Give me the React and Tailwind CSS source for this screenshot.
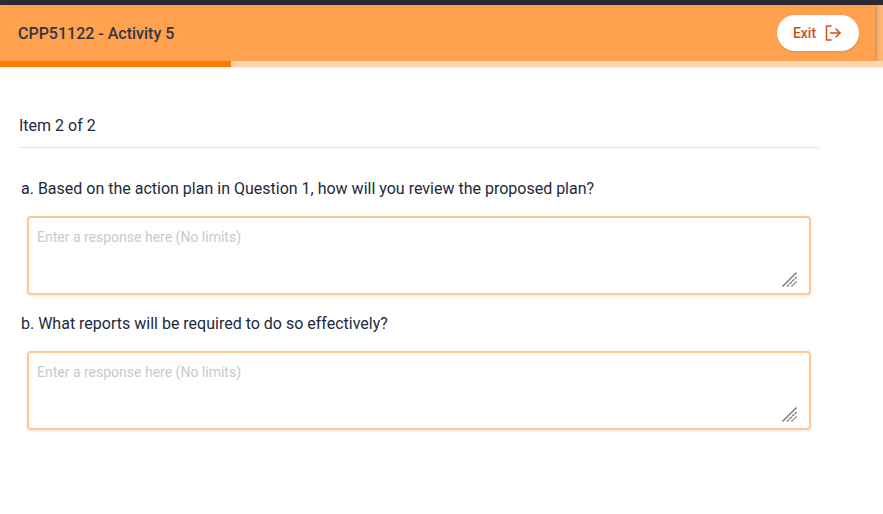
import React from "react";

function Question({ label }) {
	return (
		<div>
			<p className="ml-[2px] text-[16px] leading-[24px] text-[#1e293b]">{label}</p>
			<div className="relative ml-[8px] mt-[15px] w-[784px]">
				<textarea
					placeholder="Enter a response here (No limits)"
					className="block h-[79px] w-full resize-none rounded-[4px] border-2 border-[#ffc794] bg-white px-[8px] py-[9px] text-[14px] leading-[20px] text-[#1e293b] shadow-[0_1px_3px_rgba(0,0,0,0.1)] outline-none placeholder:text-[#c6cad0]"
				/>
				<svg className="absolute bottom-[8px] right-[14px]" width="15" height="15" viewBox="0 0 15 15" fill="none" stroke="#7a7a7a" strokeWidth="1.4">
					<path d="M0.5 14.5L14.5 0.5" />
					<path d="M5 14.5L14.5 5" strokeDasharray="3 0.7" />
					<path d="M9.5 14.5L14.5 9.5" strokeDasharray="2 0.7" />
				</svg>
			</div>
		</div>
	);
}

export default function App() {
	return (
		<div className="h-[514px] w-[883px] overflow-hidden bg-white font-['Roboto',sans-serif]">
			<div className="h-[5px] bg-[#2b2b36]" />
			<div className="flex h-[56px] bg-[#ffb672]">
				<div className="flex w-[875px] items-center justify-between bg-[#ffa14f] pl-[18px] pr-[16px] shadow-[2px_0_3px_rgba(0,0,0,0.2)]">
					<h1 className="mt-[1px] text-[16px] font-medium leading-[24px] text-[#33373f]">CPP51122 - Activity 5</h1>
					<button className="flex h-[36px] w-[82px] items-center justify-center gap-[9px] rounded-full bg-white pr-[2px] text-[14px] font-medium text-[#cf4f10] shadow-sm">
						Exit
						<svg width="16" height="18" viewBox="0 0 16 18" fill="none" stroke="currentColor" strokeWidth="1.5" strokeLinecap="round" strokeLinejoin="round">
							<path d="M6 2H1.5v14H6" />
							<path d="M5.5 9h9.5" />
							<path d="M11 5l4 4-4 4" />
						</svg>
					</button>
				</div>
			</div>
			<div className="relative h-[6px] bg-[#ffd5b0] shadow-[0_1px_3px_rgba(0,0,0,0.08)]">
				<div className="h-full w-[231px] bg-[#ff7a00]" />
			</div>
			<div className="ml-[19px] mt-[47px] w-[800px]">
				<div className="border-b border-[#e2e4e8] pb-[9px] text-[16px] leading-[24px] text-[#1e293b]">Item 2 of 2</div>
				<div className="mt-[29px] flex flex-col gap-[17px]">
					<Question label="a. Based on the action plan in Question 1, how will you review the proposed plan?" />
					<Question label="b. What reports will be required to do so effectively?" />
				</div>
			</div>
		</div>
	);
}
